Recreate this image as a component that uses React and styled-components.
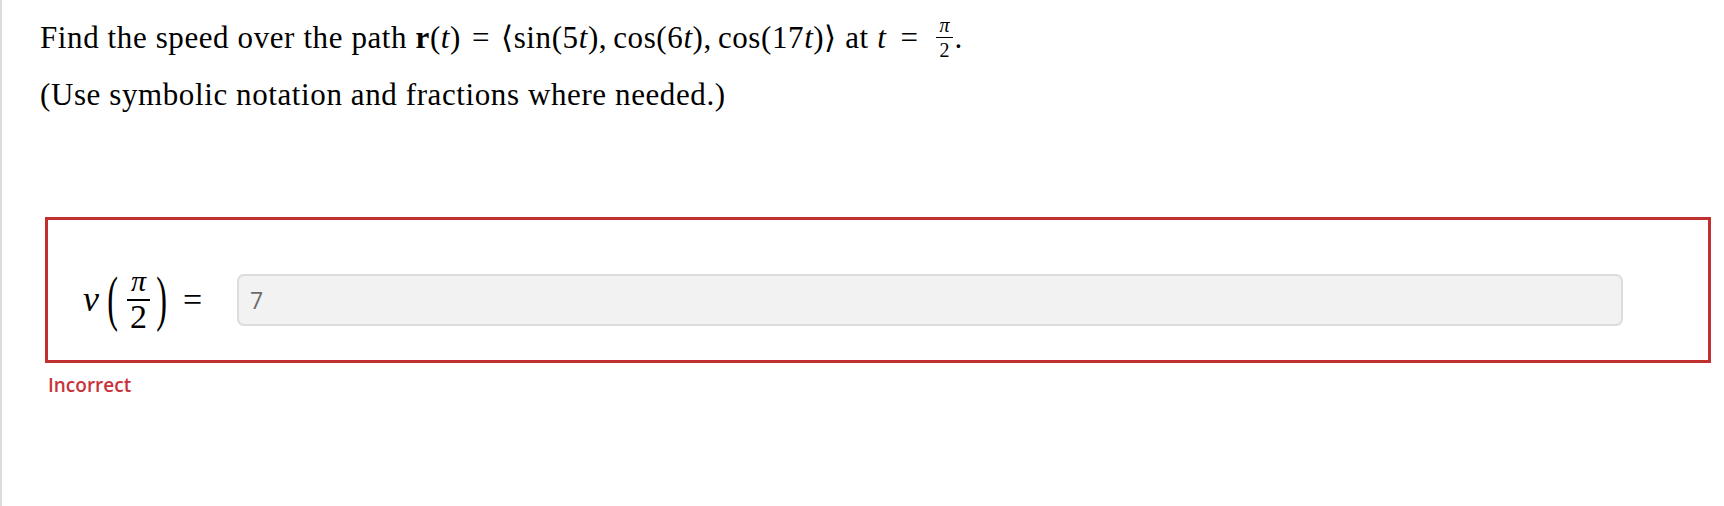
import React from 'react';
import styled, { createGlobalStyle } from 'styled-components';

const GlobalStyle = createGlobalStyle`
  html, body {
    margin: 0;
    padding: 0;
    background: #fff;
  }
  body {
    font-family: "Liberation Serif", "Times New Roman", serif;
    color: #000;
  }
`;

const Page = styled.div`
  min-height: 506px;
  box-sizing: border-box;
  border-left: 2px solid #dcdcdc;
  padding: 9px 13px 0 38px;
`;

const Prompt = styled.p`
  margin: 0;
  font-size: 31px;
  letter-spacing: 0.6px;
  line-height: 57px;
  white-space: nowrap;
`;

const Bold = styled.b`
  font-weight: bold;
`;

const Var = styled.i`
  font-style: italic;
`;

const Op = styled.span`
  margin: 0 ${(p) => p.gap || 11}px;
`;

const Comma = styled.span`
  margin-right: 6px;
`;

const InlineFrac = styled.span`
  display: inline-flex;
  flex-direction: column;
  align-items: center;
  vertical-align: middle;
  font-size: 20px;
  letter-spacing: 0;
  line-height: 1;
  margin: 0 2px 0 4px;
  position: relative;
  top: -3px;
`;

const InlineNum = styled.span`
  font-style: italic;
  padding: 0 3px 2px;
  border-bottom: 1px solid #000;
`;

const InlineDen = styled.span`
  padding-top: 2px;
`;

const AnswerBox = styled.div`
  margin: 94px 0 0 5px;
  border: 3px solid #c1302f;
  padding: 54px 85px 34px 35px;
`;

const AnswerRow = styled.div`
  display: flex;
  align-items: center;
  height: 52px;
`;

const MathLabel = styled.div`
  width: 154px;
  flex: none;
  display: flex;
  align-items: center;
  line-height: 1;
`;

const MathVar = styled.span`
  width: 23px;
  font-style: italic;
  font-size: 36px;
  line-height: 36px;
  position: relative;
  top: -1px;
`;

const Paren = styled.span`
  width: 13px;
  display: flex;
  justify-content: center;
  font-size: 62px;
  line-height: 52px;
  height: 52px;
  transform: scaleX(0.52);
  position: relative;
  top: -2px;
`;

const Frac = styled.span`
  display: flex;
  flex-direction: column;
  align-items: center;
  margin: 0 5px 0 8px;
  width: 23px;
`;

const Num = styled.span`
  align-self: stretch;
  text-align: center;
  font-style: italic;
  font-size: 30px;
  line-height: 24px;
  height: 24px;
  padding-bottom: 6px;
  border-bottom: 2px solid #000;
`;

const Den = styled.span`
  font-size: 34px;
  line-height: 28px;
  height: 28px;
  padding-top: 2px;
`;

const Equals = styled.span`
  margin-left: 15px;
  font-size: 34px;
`;

const AnswerInput = styled.div`
  flex: 1;
  height: 52px;
  box-sizing: border-box;
  border: 2px solid #dcdcdc;
  border-radius: 7px;
  background: #f2f2f2;
  display: flex;
  align-items: center;
  padding-left: 11px;
  font-family: "Open Sans", "Liberation Sans", sans-serif;
  font-size: 23px;
  color: #6b6b6b;
`;

const Feedback = styled.div`
  margin: 10px 0 0 8px;
  font-family: "Open Sans", "Liberation Sans", sans-serif;
  font-weight: 600;
  font-size: 19px;
  line-height: 24px;
  color: #c8333a;
`;

const App = () => (
  <>
    <GlobalStyle />
    <Page>
      <Prompt>
        Find the speed over the path <Bold>r</Bold>(<Var>t</Var>)
        <Op>=</Op>⟨sin(5<Var>t</Var>)<Comma>,</Comma>cos(6<Var>t</Var>)<Comma>,</Comma>cos(17<Var>t</Var>)⟩ at{' '}
        <Var>t</Var>
        <Op gap={14}>=</Op>
        <InlineFrac>
          <InlineNum>π</InlineNum>
          <InlineDen>2</InlineDen>
        </InlineFrac>
        .
      </Prompt>
      <Prompt>(Use symbolic notation and fractions where needed.)</Prompt>

      <AnswerBox>
        <AnswerRow>
          <MathLabel>
            <MathVar>v</MathVar>
            <Paren>(</Paren>
            <Frac>
              <Num>π</Num>
              <Den>2</Den>
            </Frac>
            <Paren>)</Paren>
            <Equals>=</Equals>
          </MathLabel>
          <AnswerInput>7</AnswerInput>
        </AnswerRow>
      </AnswerBox>
      <Feedback>Incorrect</Feedback>
    </Page>
  </>
);

export default App;
